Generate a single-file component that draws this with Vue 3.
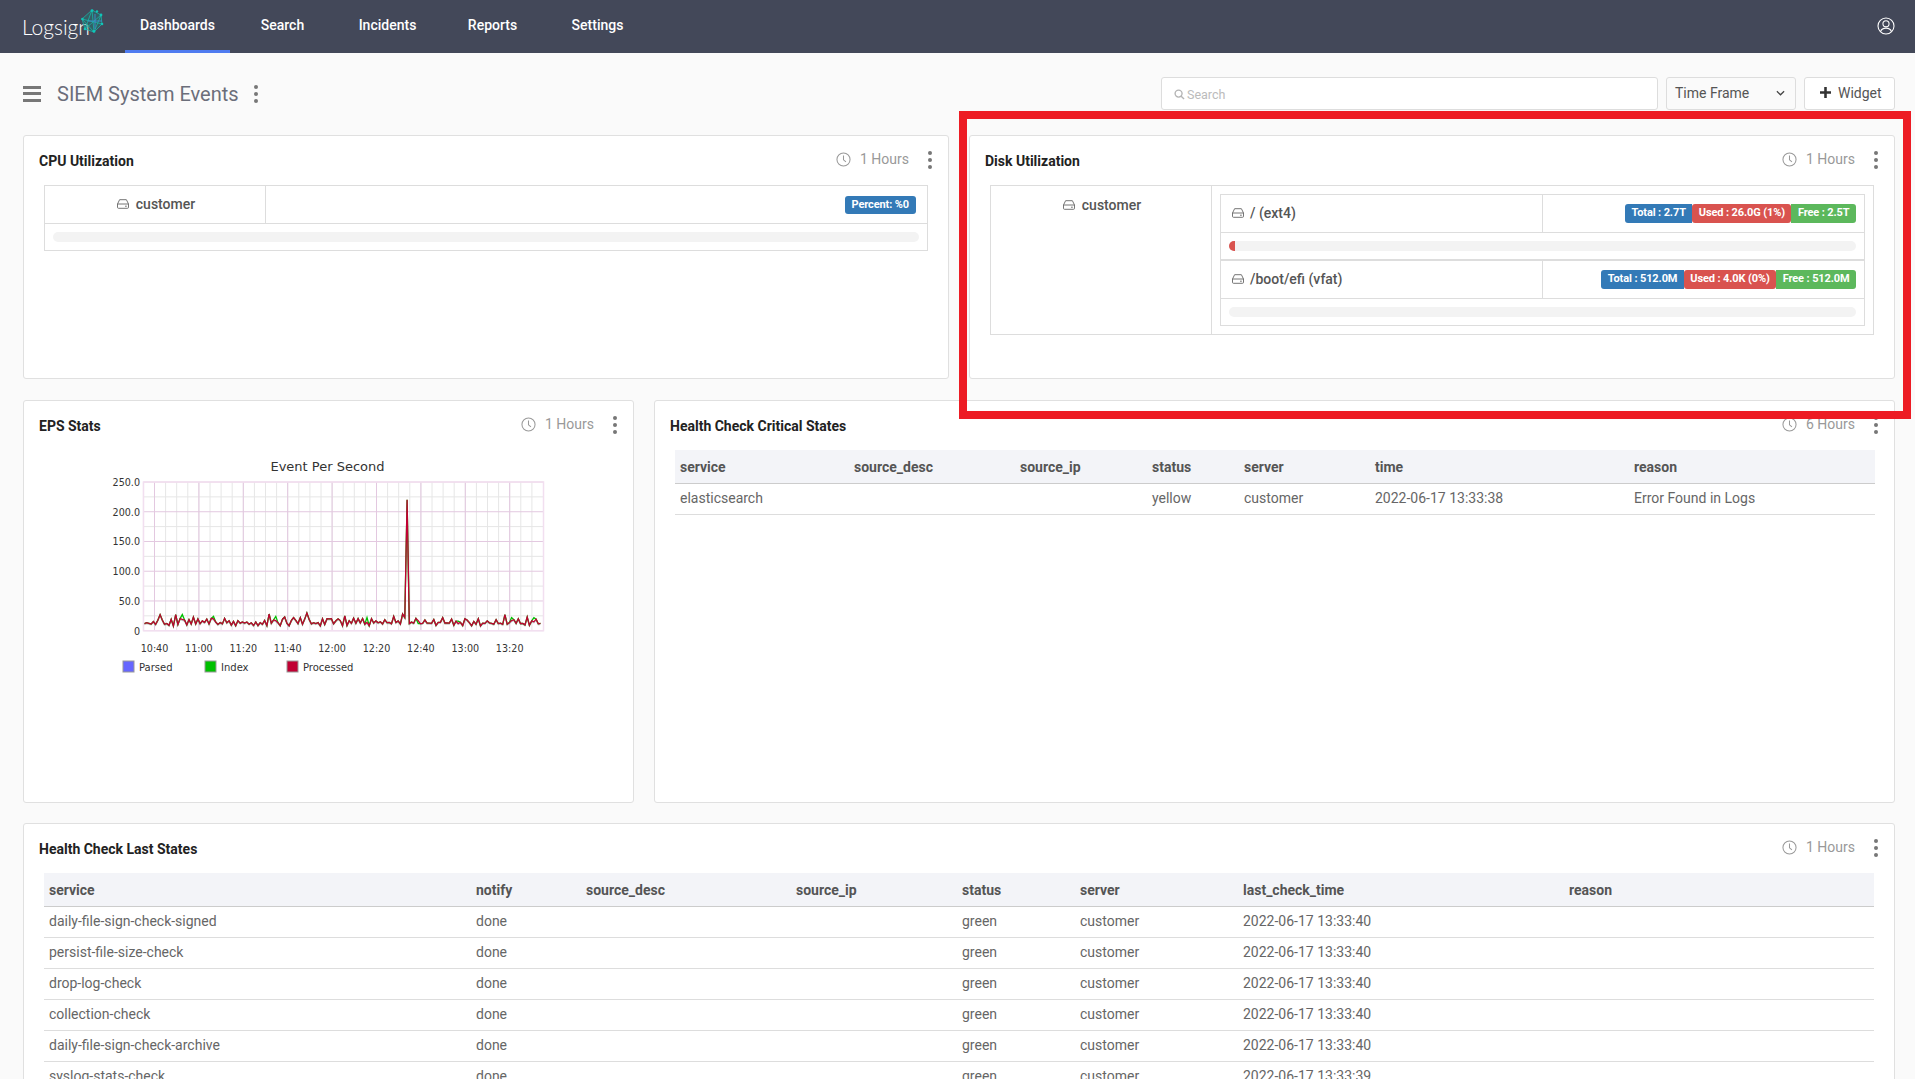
<template>
  <div class="page">
    <nav class="topnav">
      <div class="logo">
        <span>Logsign</span>
        <svg class="logo-mark" viewBox="0 0 24 24" width="24" height="24">
          <polygon points="12,1 21,6 22,15 14,23 5,20 2,10" fill="#1f7f78" fill-opacity="0.4" />
          <g stroke="#19b3a6" stroke-width="0.8" fill="none">
            <polygon points="12,1 21,6 22,15 14,23 5,20 2,10" />
            <path d="M12 1L14 23M2 10L22 15M21 6L5 20M12 1L5 20M2 10L14 23M21 6L14 23" />
          </g>
          <g stroke="#3f8fd0" stroke-width="0.9"><path d="M15 5V20M8 12H22" /></g>
          <g fill="#10c5b8">
            <circle cx="12" cy="1.6" r="1.4" /><circle cx="21" cy="6" r="1.4" /><circle cx="22" cy="15" r="1.3" />
            <circle cx="14" cy="22.4" r="1.4" /><circle cx="5" cy="20" r="1.3" /><circle cx="2.4" cy="10" r="1.3" />
            <circle cx="17" cy="2.4" r="1.2" />
          </g>
        </svg>
      </div>
      <a v-for="(item, i) in navItems" :key="item" class="navlink" :class="{ active: i === 0 }">{{ item }}</a>
      <svg class="usericon" viewBox="0 0 20 20" width="18" height="18" fill="none" stroke="#fff" stroke-width="1.2">
        <circle cx="10" cy="10" r="8.9" />
        <circle cx="10" cy="7.6" r="3.4" />
        <path d="M3.9 16.2C5 13.4 7.2 12.4 10 12.4S15 13.4 16.1 16.2" />
      </svg>
    </nav>

    <div class="content">
      <div class="pagehead">
        <div class="burger"><i></i><i></i><i></i></div>
        <h1>SIEM System Events</h1>
        <div class="kebab big"><i></i><i></i><i></i></div>
        <div class="tools">
          <div class="searchbox">
            <svg viewBox="0 0 12 12" width="11" height="11" fill="none" stroke="#b4b4b4" stroke-width="1.5">
              <circle cx="5" cy="5" r="3.8" /><path d="M7.8 7.8L11 11" />
            </svg>
            <span>Search</span>
          </div>
          <div class="btn timeframe">
            <span>Time Frame</span>
            <svg viewBox="0 0 10 6" width="9" height="6" fill="none" stroke="#444" stroke-width="1.4"><path d="M1 1L5 5L9 1" /></svg>
          </div>
          <div class="btn widget">
            <svg viewBox="0 0 12 12" width="11" height="11" fill="#333"><path d="M4.6 0H7.4V4.6H12V7.4H7.4V12H4.6V7.4H0V4.6H4.6Z" /></svg>
            <span>Widget</span>
          </div>
        </div>
      </div>

      <div class="row row-top">
        <section class="card">
          <div class="cardhead">
            <h2>CPU Utilization</h2>
            <div class="period">
              <svg class="clock" viewBox="0 0 16 16" width="15" height="15" fill="none" stroke="#999" stroke-width="1.1"><circle cx="8" cy="8" r="7" /><path d="M8 3.6V8.4L10.6 10.6" /></svg>
              <span>1 Hours</span>
            </div>
            <div class="kebab"><i></i><i></i><i></i></div>
          </div>
          <div class="cardbody">
            <div class="box">
              <div class="cpurow">
                <div class="hostcell cpuhost">
                  <svg class="hdd" viewBox="0 0 12 10" width="12" height="10" fill="none" stroke="#666" stroke-width="0.9"><path d="M2.6 .7H9.4L11.5 5V8.3A1 1 0 0 1 10.5 9.3H1.5A1 1 0 0 1 .5 8.3V5ZM.5 5H11.5" /><path d="M8 7.2H9.8" /></svg>
                  <span>customer</span>
                </div>
                <div class="cpubadge"><span class="badge blue single">Percent: %0</span></div>
              </div>
              <div class="barwrap"><div class="bar"></div></div>
            </div>
          </div>
        </section>

        <section class="card">
          <div class="cardhead">
            <h2>Disk Utilization</h2>
            <div class="period">
              <svg class="clock" viewBox="0 0 16 16" width="15" height="15" fill="none" stroke="#999" stroke-width="1.1"><circle cx="8" cy="8" r="7" /><path d="M8 3.6V8.4L10.6 10.6" /></svg>
              <span>1 Hours</span>
            </div>
            <div class="kebab"><i></i><i></i><i></i></div>
          </div>
          <div class="cardbody">
            <div class="box diskbox">
              <div class="hostcell diskhost">
                <svg class="hdd" viewBox="0 0 12 10" width="12" height="10" fill="none" stroke="#666" stroke-width="0.9"><path d="M2.6 .7H9.4L11.5 5V8.3A1 1 0 0 1 10.5 9.3H1.5A1 1 0 0 1 .5 8.3V5ZM.5 5H11.5" /><path d="M8 7.2H9.8" /></svg>
                <span>customer</span>
              </div>
              <div class="disklist">
                <div class="disks">
                  <div v-for="d in disks" :key="d.name" class="disk">
                    <div class="diskrow">
                      <div class="diskname">
                        <svg class="hdd" viewBox="0 0 12 10" width="12" height="10" fill="none" stroke="#666" stroke-width="0.9"><path d="M2.6 .7H9.4L11.5 5V8.3A1 1 0 0 1 10.5 9.3H1.5A1 1 0 0 1 .5 8.3V5ZM.5 5H11.5" /><path d="M8 7.2H9.8" /></svg>
                        <span>{{ d.name }}</span>
                      </div>
                      <div class="diskbadges">
                        <span class="badge blue">{{ d.total }}</span><span class="badge red">{{ d.used }}</span><span class="badge green">{{ d.free }}</span>
                      </div>
                    </div>
                    <div class="barwrap"><div class="bar"><div class="fill" :style="{ width: d.pct + 'px' }"></div></div></div>
                  </div>
                </div>
              </div>
            </div>
          </div>
        </section>
      </div>

      <div class="row row-mid">
        <section class="card">
          <div class="cardhead">
            <h2>EPS Stats</h2>
            <div class="period">
              <svg class="clock" viewBox="0 0 16 16" width="15" height="15" fill="none" stroke="#999" stroke-width="1.1"><circle cx="8" cy="8" r="7" /><path d="M8 3.6V8.4L10.6 10.6" /></svg>
              <span>1 Hours</span>
            </div>
            <div class="kebab"><i></i><i></i><i></i></div>
          </div>
          <svg class="chart" width="609" height="260" viewBox="24 451 609 260">
            <text x="327.5" y="472" text-anchor="middle" class="charttitle">Event Per Second</text>
            <rect x="143.5" y="483" width="400" height="148.7" fill="#fff" />
            <line v-for="x in minorX" :key="'mx' + x" :x1="x" :x2="x" y1="483" y2="631.7" stroke="#e6e6e6" />
            <line v-for="y in minorY" :key="'my' + y" x1="143.5" x2="543.5" :y1="y" :y2="y" stroke="#e6e6e6" />
            <line v-for="t in ticksX" :key="'tx' + t.x" :x1="t.x" :x2="t.x" y1="483" y2="631.7" stroke="#e3c8e0" />
            <line v-for="t in ticksY" :key="'ty' + t.y" x1="143.5" x2="543.5" :y1="t.y" :y2="t.y" stroke="#e3c8e0" />
            <rect x="143.5" y="483" width="400" height="148.7" fill="none" stroke="#f2dff0" stroke-width="1.5" />
            <polyline :points="greyLine" fill="none" stroke="#444" stroke-opacity="0.3" stroke-width="1.2" />
            <polyline :points="greenLine" fill="none" stroke="#00c000" stroke-width="1.3" />
            <polyline :points="redLine" fill="none" stroke="#c00033" stroke-width="1.3" />
            <text v-for="t in ticksY" :key="'ly' + t.y" x="140" :y="t.y + 4" text-anchor="end" class="tick">{{ t.label }}</text>
            <text v-for="t in ticksX" :key="'lx' + t.x" :x="t.x" y="652.5" text-anchor="middle" class="tick">{{ t.label }}</text>
            <g v-for="l in legend" :key="l.label">
              <rect :x="l.x" y="662" width="11" height="11" :fill="l.color" stroke="#999" />
              <text :x="l.x + 16" y="671.5" class="legendtext">{{ l.label }}</text>
            </g>
          </svg>
        </section>

        <section class="card">
          <div class="cardhead">
            <h2>Health Check Critical States</h2>
            <div class="period">
              <svg class="clock" viewBox="0 0 16 16" width="15" height="15" fill="none" stroke="#999" stroke-width="1.1"><circle cx="8" cy="8" r="7" /><path d="M8 3.6V8.4L10.6 10.6" /></svg>
              <span>6 Hours</span>
            </div>
            <div class="kebab"><i></i><i></i><i></i></div>
          </div>
          <div class="cardbody">
            <table>
              <colgroup><col v-for="w in criticalCols" :key="w" :style="{ width: w + 'px' }" /></colgroup>
              <thead>
                <tr><th v-for="h in criticalHead" :key="h">{{ h }}</th></tr>
              </thead>
              <tbody>
                <tr><td v-for="(c, i) in criticalRow" :key="i">{{ c }}</td></tr>
              </tbody>
            </table>
          </div>
        </section>
      </div>

      <section class="card lastcard">
        <div class="cardhead">
          <h2>Health Check Last States</h2>
          <div class="period">
            <svg class="clock" viewBox="0 0 16 16" width="15" height="15" fill="none" stroke="#999" stroke-width="1.1"><circle cx="8" cy="8" r="7" /><path d="M8 3.6V8.4L10.6 10.6" /></svg>
            <span>1 Hours</span>
          </div>
          <div class="kebab"><i></i><i></i><i></i></div>
        </div>
        <div class="cardbody">
          <table>
            <colgroup><col v-for="w in lastCols" :key="w" :style="{ width: w + 'px' }" /></colgroup>
            <thead>
              <tr><th v-for="h in lastHead" :key="h">{{ h }}</th></tr>
            </thead>
            <tbody>
              <tr v-for="r in lastRows" :key="r.service">
                <td>{{ r.service }}</td>
                <td>done</td>
                <td></td>
                <td></td>
                <td>green</td>
                <td>customer</td>
                <td>{{ r.time }}</td>
                <td></td>
              </tr>
            </tbody>
          </table>
        </div>
      </section>
    </div>

    <div class="highlight"></div>
  </div>
</template>

<script setup>
const navItems = ['Dashboards', 'Search', 'Incidents', 'Reports', 'Settings']

const disks = [
  { name: '/ (ext4)', total: 'Total : 2.7T', used: 'Used : 26.0G (1%)', free: 'Free : 2.5T', pct: 6 },
  { name: '/boot/efi (vfat)', total: 'Total : 512.0M', used: 'Used : 4.0K (0%)', free: 'Free : 512.0M', pct: 0 }
]

const criticalCols = [174, 166, 132, 92, 131, 259, 246]
const criticalHead = ['service', 'source_desc', 'source_ip', 'status', 'server', 'time', 'reason']
const criticalRow = ['elasticsearch', '', '', 'yellow', 'customer', '2022-06-17 13:33:38', 'Error Found in Logs']

const lastCols = [427, 110, 210, 166, 118, 163, 326, 310]
const lastHead = ['service', 'notify', 'source_desc', 'source_ip', 'status', 'server', 'last_check_time', 'reason']
const lastRows = [
  { service: 'daily-file-sign-check-signed', time: '2022-06-17 13:33:40' },
  { service: 'persist-file-size-check', time: '2022-06-17 13:33:40' },
  { service: 'drop-log-check', time: '2022-06-17 13:33:40' },
  { service: 'collection-check', time: '2022-06-17 13:33:40' },
  { service: 'daily-file-sign-check-archive', time: '2022-06-17 13:33:40' },
  { service: 'syslog-stats-check', time: '2022-06-17 13:33:39' }
]

// chart axes, in page pixels
const x0 = 143.5
const yBase = 631.7
const stepX = 2.225
const yOf = (v) => yBase - v * 0.5948

const ticksX = ['10:40', '11:00', '11:20', '11:40', '12:00', '12:20', '12:40', '13:00', '13:20'].map((label, i) => ({
  label,
  x: 154.5 + i * 44.4
}))
const ticksY = [
  { label: '250.0', y: 483 },
  { label: '200.0', y: yOf(200) },
  { label: '150.0', y: yOf(150) },
  { label: '100.0', y: yOf(100) },
  { label: '50.0', y: yOf(50) },
  { label: '0', y: yBase }
]
const minorX = []
for (let x = 143.4; x < 543; x += 11.1) minorX.push(x)
const minorY = [25, 75, 125, 175, 225].map(yOf)

const legend = [
  { label: 'Parsed', x: 123, color: '#6666ff' },
  { label: 'Index', x: 205, color: '#00c000' },
  { label: 'Processed', x: 287, color: '#c00033' }
]

// one sample a minute, spikes read off the reference
const peaks = {
  7: 27, 14: 27, 17: 19, 22: 23, 31: 20, 56: 28, 59: 17, 63: 23, 67: 22, 70: 22, 73: 30, 80: 20, 83: 20, 87: 20,
  90: 25, 94: 21, 100: 14, 112: 24, 116: 28, 117: 22, 118: 220, 119: 12, 123: 17, 126: 18, 130: 19, 134: 22,
  141: 12, 145: 18, 162: 27, 165: 17, 168: 20, 172: 23, 175: 15
}
const greenPeaks = { 17: 27, 31: 24, 59: 24, 100: 22, 123: 12, 141: 16, 165: 22, 175: 22 }

const samples = []
for (let i = 0; i < 179; i++) {
  const noise = Math.abs(Math.sin(i * 12.9898) * 43758.5453) % 1
  samples.push(peaks[i] ?? (i % 2 ? 8 + noise * 6 : 12 + noise * 9))
}
const toLine = (vals, dy = 0) => vals.map((v, i) => `${(x0 + 1 + i * stepX).toFixed(1)},${(yOf(v) + dy).toFixed(1)}`).join(' ')
const redLine = toLine(samples)
const greyLine = toLine(samples, 1)
const greenLine = toLine(samples.map((v, i) => greenPeaks[i] ?? v))
</script>

<style scoped>
.page {
  position: relative;
  height: 100vh;
  overflow: hidden;
  background: #fafafa;
  font-family: Roboto, "Liberation Sans", sans-serif;
  font-size: 14px;
  color: #666;
}
.topnav {
  display: flex;
  height: 53px;
  background: #434859;
  color: #fff;
  padding-left: 125px;
  position: relative;
}
.logo {
  position: absolute;
  left: 22px;
  top: 15px;
  font-family: Lato, sans-serif;
  font-weight: 300;
  font-size: 21px;
  line-height: 24px;
  color: #fff;
}
.logo-mark {
  position: absolute;
  left: 58px;
  top: -6px;
}
.navlink {
  width: 105px;
  text-align: center;
  line-height: 50px;
  font-weight: 500;
  font-size: 14px;
  height: 53px;
  box-sizing: border-box;
}
.navlink.active {
  border-bottom: 3px solid #4f7bf0;
}
.usericon {
  position: absolute;
  right: 20px;
  top: 17px;
}
.content {
  padding: 24px 20px 0 23px;
}
.pagehead {
  display: flex;
  align-items: center;
  height: 33px;
  margin-bottom: 25px;
}
.burger {
  display: flex;
  flex-direction: column;
  gap: 3.5px;
  width: 18px;
  margin-right: 16px;
}
.burger i {
  display: block;
  height: 3px;
  background: #777;
}
h1 {
  margin: 0;
  font-size: 20px;
  font-weight: 400;
  color: #6b6e7a;
}
.kebab {
  display: flex;
  flex-direction: column;
  gap: 3px;
  width: 4px;
  margin-left: 15px;
}
.kebab i {
  display: block;
  width: 4px;
  height: 4px;
  border-radius: 50%;
  background: #777;
}
.kebab.big {
  margin-left: 15px;
}
.tools {
  display: flex;
  gap: 8px;
  margin-left: auto;
  height: 33px;
}
.searchbox {
  width: 497px;
  box-sizing: border-box;
  background: #fff;
  border: 1px solid #ddd;
  border-radius: 3px;
  display: flex;
  align-items: center;
  gap: 2px;
  padding: 2px 0 0 12px;
  font-size: 12.5px;
  color: #bbb;
}
.btn {
  box-sizing: border-box;
  background: #fff;
  border: 1px solid #ddd;
  border-radius: 3px;
  display: flex;
  align-items: center;
  color: #555;
  padding-bottom: 2px;
}
.timeframe {
  width: 130px;
  justify-content: space-between;
  padding-left: 8px;
  padding-right: 10px;
  background: #fafafa;
}
.widget {
  width: 91px;
  padding-left: 15px;
  gap: 7px;
}
.row {
  display: grid;
  gap: 20px;
  margin-bottom: 21px;
}
.row-top {
  grid-template-columns: 926px 926px;
  height: 244px;
}
.row-mid {
  grid-template-columns: 611px 1241px;
  height: 403px;
  margin-bottom: 20px;
}
.card {
  box-sizing: border-box;
  background: #fff;
  border: 1px solid #e0e0e0;
  border-radius: 3px;
  min-width: 0;
}
.lastcard {
  height: 400px;
}
.cardhead {
  display: flex;
  align-items: center;
  height: 49px;
  padding: 0 16px 0 15px;
  box-sizing: border-box;
}
h2 {
  margin: 0 auto 0 0;
  font-size: 14px;
  font-weight: 700;
  color: #222;
}
.period {
  display: flex;
  align-items: center;
  gap: 9px;
  color: #999;
  margin-bottom: 3px;
}
.cardhead .kebab {
  margin-left: 19px;
  margin-bottom: 2px;
  gap: 3px;
}
.cardbody {
  padding: 0 20px;
}
.box {
  border: 1px solid #ddd;
}
.cpurow {
  display: flex;
  height: 38px;
  box-sizing: border-box;
  border-bottom: 1px solid #ddd;
}
.hostcell {
  width: 221px;
  box-sizing: border-box;
  display: flex;
  align-items: center;
  justify-content: center;
  gap: 7px;
  padding-left: 2px;
  font-weight: 500;
  color: #555;
  border-right: 1px solid #ddd;
}
.cpuhost {
  padding-bottom: 2px;
}
.cpubadge {
  flex: 1;
  display: flex;
  align-items: center;
  justify-content: flex-end;
  padding-right: 11px;
}
.diskbox {
  display: flex;
  box-sizing: border-box;
}
.diskhost {
  height: auto;
  align-items: flex-start;
  padding-top: 10px;
  line-height: 18px;
}
.diskhost .hdd {
  margin-top: 4px;
}
.disklist {
  flex: 1;
  padding: 8px;
}
.disks {
  border: 1px solid #ddd;
}
.disk + .disk {
  border-top: 2px solid #ddd;
}
.diskrow {
  display: flex;
  height: 38px;
  box-sizing: border-box;
  border-bottom: 1px solid #ddd;
}
.diskname {
  width: 322px;
  box-sizing: border-box;
  display: flex;
  align-items: center;
  gap: 6px;
  padding: 0 0 1px 11px;
  color: #555;
  font-weight: 500;
  border-right: 1px solid #ddd;
}
.diskbadges {
  flex: 1;
  display: flex;
  align-items: center;
  justify-content: flex-end;
  padding-right: 8px;
}
.badge {
  height: 19px;
  line-height: 18px;
  padding: 0 6.5px;
  color: #fff;
  font-size: 11px;
  font-weight: 700;
  letter-spacing: -0.12px;
  white-space: nowrap;
}
.badge.single {
  border-radius: 3px;
  padding: 0 7px;
  height: 18px;
  line-height: 18px;
}
.blue {
  background: #337ab7;
  border-radius: 3px 0 0 3px;
}
.red {
  background: #d9534f;
  border-radius: 3px;
}
.green {
  background: #5cb85c;
  border-radius: 0 3px 3px 0;
}
.barwrap {
  padding: 8px;
}
.bar {
  height: 10px;
  background: #f3f3f3;
  border-radius: 5px;
  overflow: hidden;
}
.fill {
  height: 100%;
  background: #d9534f;
}
.chart {
  display: block;
}
.charttitle {
  font-family: "DejaVu Sans", sans-serif;
  font-size: 13px;
  fill: #333;
}
.tick {
  font-family: "DejaVu Sans", sans-serif;
  font-size: 9.6px;
  fill: #333;
}
.legendtext {
  font-family: "DejaVu Sans", sans-serif;
  font-size: 10px;
  fill: #333;
}
table {
  width: 100%;
  border-collapse: collapse;
  table-layout: fixed;
}
th {
  height: 33px;
  padding: 0 5px;
  text-align: left;
  font-weight: 700;
  color: #555;
  background: #f3f4f8;
  border-bottom: 1px solid #ccc;
}
td {
  height: 31px;
  padding: 0 5px 2px;
  color: #666;
  border-bottom: 1px solid #ddd;
  box-sizing: border-box;
}
.highlight {
  position: absolute;
  left: 959px;
  top: 111px;
  width: 952px;
  height: 308px;
  box-sizing: border-box;
  border: 8px solid #ed1c24;
  pointer-events: none;
}
</style>

<style>
html, body {
  margin: 0;
  overflow: hidden;
}
</style>
